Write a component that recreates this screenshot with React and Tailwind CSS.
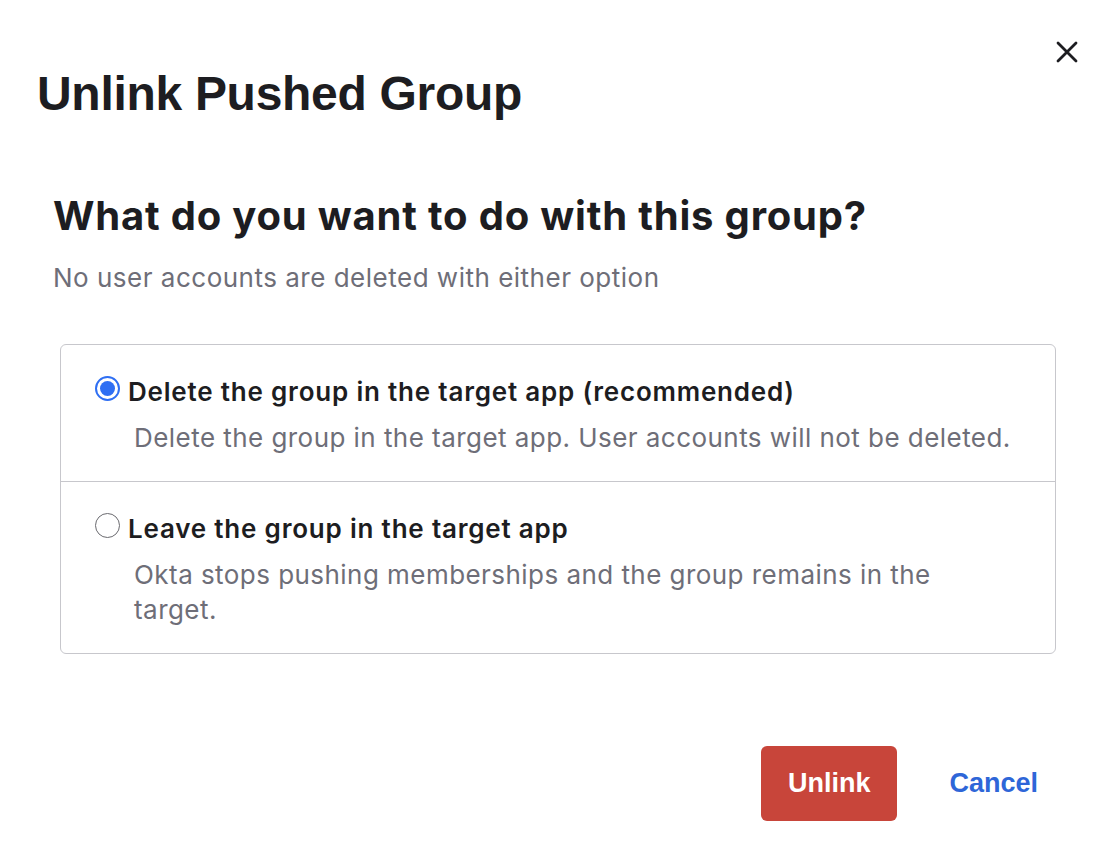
import { useState } from 'react'

const options = [
  {
    id: 'delete',
    label: 'Delete the group in the target app (recommended)',
    description: 'Delete the group in the target app. User accounts will not be deleted.',
  },
  {
    id: 'leave',
    label: 'Leave the group in the target app',
    description: 'Okta stops pushing memberships and the group remains in the target.',
  },
]

const Radio = ({ checked }) => (
  <span
    className={`flex h-[25px] w-[25px] shrink-0 items-center justify-center rounded-full ${
      checked ? 'border-[2px] border-[#2f6ff3]' : 'border-[1.5px] border-[#6a6a6f]'
    }`}
  >
    {checked && <span className="h-[15px] w-[15px] rounded-full bg-[#2f6ff3]" />}
  </span>
)

export default function App() {
  const [selected, setSelected] = useState('delete')

  return (
    <div className="relative h-[868px] w-[1112px] overflow-hidden bg-white font-['Inter',sans-serif] text-[#1d1d21]">
      <button className="absolute right-[33px] top-[40px] flex h-[24px] w-[24px] items-center justify-center">
        <svg width="24" height="24" viewBox="0 0 24 24" fill="none">
          <path d="M3 3L21 21M21 3L3 21" stroke="#1d1d21" strokeWidth="2.8" strokeLinecap="round" />
        </svg>
      </button>

      <h1 className="pl-[37px] pt-[65px] font-['Liberation_Sans',Arial,sans-serif] text-[48px] font-bold leading-[58px] tracking-[-0.3px]">
        Unlink Pushed Group
      </h1>

      <div className="pl-[53px] pr-[56px]">
        <h2 className="mt-[69px] text-[40px] font-bold leading-[48px] tracking-[0.8px]">What do you want to do with this group?</h2>
        <p className="mt-[22px] text-[26px] leading-[32px] tracking-[0.5px] text-[#6e6e78]">No user accounts are deleted with either option</p>

        <div className="ml-[7px] mt-[50px] rounded-[6px] border border-[#c7c7cc]">
          {options.map((opt, index) => (
            <label
              key={opt.id}
              onClick={() => setSelected(opt.id)}
              className={`block cursor-pointer pb-[26px] pl-[34px] pr-[36px] pt-[31px] ${
                index > 0 ? 'border-t border-[#c7c7cc]' : ''
              }`}
            >
              <div className="flex items-start gap-[8px]">
                <Radio checked={selected === opt.id} />
                <span className="text-[26px] font-semibold leading-[32px] tracking-[0.8px]">{opt.label}</span>
              </div>
              <p className="mt-[12px] pl-[39px] text-[26px] leading-[35px] tracking-[0.45px] text-[#6e6e78]">{opt.description}</p>
            </label>
          ))}
        </div>

        <div className="mt-[92px] flex items-center justify-end gap-[52px] pr-[18px] font-['Liberation_Sans',Arial,sans-serif]">
          <button className="h-[75px] rounded-[6px] bg-[#c8453a] px-[27px] text-[27px] font-bold text-white">Unlink</button>
          <button className="text-[27px] font-bold text-[#2e66d8]">Cancel</button>
        </div>
      </div>
    </div>
  )
}
